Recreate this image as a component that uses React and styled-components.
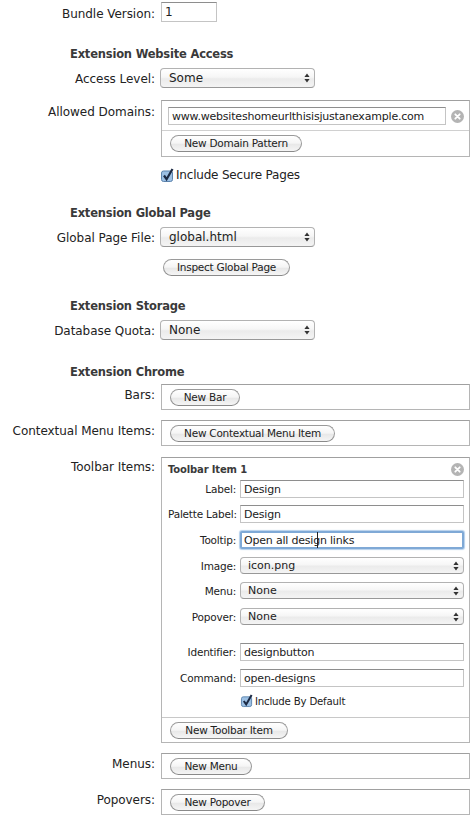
import React from 'react';
import styled, { createGlobalStyle } from 'styled-components';

const GlobalStyle = createGlobalStyle`
  html, body {
    margin: 0;
    padding: 0;
    background: #ffffff;
  }
  body {
    font-family: 'DejaVu Sans', 'Liberation Sans', sans-serif;
    color: #222222;
  }
  * {
    box-sizing: border-box;
  }
`;

const Page = styled.div`
  width: 474px;
  height: 822px;
  overflow: hidden;
  padding-top: 2px;
  display: flex;
  flex-direction: column;
`;

const Row = styled.div`
  display: flex;
  align-items: flex-start;
  margin-top: ${(p) => p.$top || 0}px;
`;

const Label = styled.label`
  width: 155px;
  flex: none;
  text-align: right;
  font-size: 12px;
  line-height: 16px;
  padding-top: ${(p) => p.$pad ?? 3}px;
  white-space: nowrap;
  letter-spacing: -0.05px;
`;

const Field = styled.div`
  margin-left: ${(p) => p.$left ?? 6}px;
  flex: none;
`;

const Heading = styled.h3`
  margin: ${(p) => p.$top}px 0 0 70px;
  height: 16px;
  font-size: 11.5px;
  line-height: 17px;
  font-weight: bold;
  color: #3a3a3a;
  letter-spacing: -0.2px;
`;

const TextInput = styled.input`
  display: block;
  width: ${(p) => p.$width}px;
  height: ${(p) => p.$height || 18}px;
  padding: 0 3px;
  border: 1px solid #c4c4c4;
  border-top: 1px solid #8e8e8e;
  border-radius: 0;
  outline: none;
  background: #fff;
  color: #222;
  font-family: inherit;
  font-size: ${(p) => p.$size || 11}px;
  letter-spacing: -0.2px;
  ${(p) =>
    p.$focused &&
    `
    border: 2px solid #7fa9d6;
    padding: 0 2px;
    box-shadow: 0 0 1px 1px #b5d0ec;
    border-radius: 2px;
  `}
`;

const Caret = styled.span`
  position: absolute;
  left: 77px;
  top: 1px;
  width: 1px;
  height: 16px;
  background: #222;
`;

const SelectWrap = styled.div`
  position: relative;
  width: ${(p) => p.$width}px;
  height: ${(p) => p.$height}px;
`;

const Select = styled.select`
  appearance: none;
  display: block;
  width: 100%;
  height: 100%;
  padding: 0 20px 0 ${(p) => p.$pad}px;
  border: 1px solid #b2b2b2;
  border-bottom-color: #989898;
  border-radius: 4px;
  background: linear-gradient(#ffffff 0%, #f6f6f6 45%, #ebebeb 55%, #f4f4f4 100%);
  color: #222;
  font-family: inherit;
  font-size: ${(p) => p.$size}px;
`;

const Arrows = styled.svg`
  position: absolute;
  right: 5px;
  top: 50%;
  margin-top: -5px;
  width: 6px;
  height: 10px;
  pointer-events: none;
`;

const Pill = styled.button`
  display: block;
  width: ${(p) => p.$width}px;
  height: 17px;
  padding: 0;
  border: 1px solid #9a9a9a;
  border-bottom-color: #8a8a8a;
  border-radius: 9px;
  background: linear-gradient(#ffffff 0%, #f5f5f5 48%, #e8e8e8 55%, #f5f5f5 100%);
  color: #222;
  font-family: inherit;
  font-size: 10.5px;
  line-height: 15px;
  letter-spacing: -0.25px;
  text-align: center;
`;

const ListBox = styled.div`
  width: 309px;
  border: 1px solid #b5b5b5;
  border-top-color: #a0a0a0;
  background: #fff;
`;

const ButtonArea = styled.div`
  height: ${(p) => p.$height}px;
  padding: ${(p) => p.$top}px 0 0 8px;
`;

const DomainItem = styled.div`
  height: 30px;
  padding: 6px 0 0 6px;
  display: flex;
  border-bottom: 1px solid #d0d0d0;
  gap: 5px;
`;

const Circle = styled.svg`
  width: 13px;
  height: 13px;
  flex: none;
  margin-top: ${(p) => p.$top}px;
`;

const CheckLine = styled.div`
  display: flex;
  align-items: center;
  gap: ${(p) => p.$gap}px;
  margin: ${(p) => p.$top}px 0 0 ${(p) => p.$left}px;
  height: ${(p) => p.$height}px;
  font-size: ${(p) => p.$size}px;
  letter-spacing: -0.2px;
  white-space: nowrap;
`;

const CheckIcon = styled.svg`
  width: ${(p) => p.$box}px;
  height: ${(p) => p.$box}px;
  flex: none;
  overflow: visible;
`;

const ItemPanel = styled.div`
  height: 260px;
  padding: 3px 5px 0 6px;
  border-bottom: 1px solid #c8c8c8;
`;

const ItemTitle = styled.div`
  display: flex;
  justify-content: space-between;
  align-items: center;
  height: 16px;
  font-size: 10px;
  font-weight: bold;
  color: #3a3a3a;
  letter-spacing: -0.15px;
`;

const ItemRow = styled.div`
  display: flex;
  align-items: center;
  height: ${(p) => p.$height || 18}px;
  margin-top: ${(p) => p.$top}px;
`;

const ItemLabel = styled.label`
  width: 68px;
  flex: none;
  text-align: right;
  font-size: 10.5px;
  letter-spacing: -0.2px;
  white-space: nowrap;
`;

const ItemControl = styled.div`
  position: relative;
  margin-left: 4px;
`;

const UpDown = () => (
  <Arrows viewBox="0 0 6 10">
    <path d="M3 0.5 L5.6 4 L0.4 4 Z M3 9.5 L5.6 6 L0.4 6 Z" fill="#333" />
  </Arrows>
);

const RemoveIcon = ({ top }) => (
  <Circle $top={top} viewBox="0 0 13 13">
    <circle cx="6.5" cy="6.5" r="6.5" fill="#b4b4b4" />
    <path d="M4.3 4.3 L8.7 8.7 M8.7 4.3 L4.3 8.7" stroke="#fff" strokeWidth="1.8" strokeLinecap="round" />
  </Circle>
);

const Tick = ({ box }) => (
  <CheckIcon $box={box} viewBox="0 0 13 13">
    <rect x="0.5" y="2" width="11" height="10.5" rx="2" fill="#9cc0e4" stroke="#5b83ad" />
    <path d="M3 6.5 L5.6 10.2 L11.5 0" fill="none" stroke="#1b2a44" strokeWidth="2.2" />
  </CheckIcon>
);

const DropDown = ({ width, height = 20, pad = 8, size = 12, value }) => (
  <SelectWrap $width={width} $height={height}>
    <Select $pad={pad} $size={size} defaultValue={value}>
      <option>{value}</option>
    </Select>
    <UpDown />
  </SelectWrap>
);

const ToolbarField = ({ label, top, value, focused }) => (
  <ItemRow $top={top}>
    <ItemLabel>{label}</ItemLabel>
    <ItemControl>
      <TextInput $width={224} $focused={focused} defaultValue={value} />
      {focused && <Caret />}
    </ItemControl>
  </ItemRow>
);

const ToolbarSelect = ({ label, top, value }) => (
  <ItemRow $top={top} $height={17}>
    <ItemLabel>{label}</ItemLabel>
    <ItemControl>
      <DropDown width={224} height={17} pad={7} size={11} value={value} />
    </ItemControl>
  </ItemRow>
);

export default function App() {
  return (
    <Page>
      <GlobalStyle />
      <Row>
        <Label $pad={4}>Bundle Version:</Label>
        <Field>
          <TextInput $width={56} $height={20} $size={12} defaultValue="1" />
        </Field>
      </Row>

      <Heading $top={24}>Extension Website Access</Heading>
      <Row $top={6}>
        <Label $pad={3}>Access Level:</Label>
        <Field $left={5}>
          <DropDown width={155} value="Some" />
        </Field>
      </Row>
      <Row $top={12}>
        <Label $pad={4}>Allowed Domains:</Label>
        <Field>
          <ListBox>
            <DomainItem>
              <TextInput $width={278} defaultValue="www.websiteshomeurlthisisjustanexample.com" />
              <RemoveIcon top={3} />
            </DomainItem>
            <ButtonArea $height={25} $top={4}>
              <Pill $width={132}>New Domain Pattern</Pill>
            </ButtonArea>
          </ListBox>
        </Field>
      </Row>
      <CheckLine $top={11} $left={161} $gap={2} $height={14} $size={12}>
        <Tick box={13} />
        Include Secure Pages
      </CheckLine>

      <Heading $top={23}>Extension Global Page</Heading>
      <Row $top={6}>
        <Label $pad={3}>Global Page File:</Label>
        <Field $left={5}>
          <DropDown width={155} value="global.html" />
        </Field>
      </Row>
      <Row $top={12}>
        <Field $left={163}>
          <Pill $width={127}>Inspect Global Page</Pill>
        </Field>
      </Row>

      <Heading $top={22}>Extension Storage</Heading>
      <Row $top={6}>
        <Label $pad={3}>Database Quota:</Label>
        <Field $left={5}>
          <DropDown width={155} value="None" />
        </Field>
      </Row>

      <Heading $top={24}>Extension Chrome</Heading>
      <Row $top={4}>
        <Label $pad={3}>Bars:</Label>
        <Field>
          <ListBox>
            <ButtonArea $height={24} $top={4}>
              <Pill $width={70}>New Bar</Pill>
            </ButtonArea>
          </ListBox>
        </Field>
      </Row>
      <Row $top={10}>
        <Label $pad={3}>Contextual Menu Items:</Label>
        <Field>
          <ListBox>
            <ButtonArea $height={24} $top={4}>
              <Pill $width={165}>New Contextual Menu Item</Pill>
            </ButtonArea>
          </ListBox>
        </Field>
      </Row>
      <Row $top={11}>
        <Label $pad={2}>Toolbar Items:</Label>
        <Field>
          <ListBox>
            <ItemPanel>
              <ItemTitle>
                Toolbar Item 1
                <RemoveIcon top={0} />
              </ItemTitle>
              <ToolbarField label="Label:" top={3} value="Design" />
              <ToolbarField label="Palette Label:" top={7} value="Design" />
              <ToolbarField label="Tooltip:" top={8} value="Open all design links" focused />
              <ToolbarSelect label="Image:" top={8} value="icon.png" />
              <ToolbarSelect label="Menu:" top={8} value="None" />
              <ToolbarSelect label="Popover:" top={9} value="None" />
              <ToolbarField label="Identifier:" top={18} value="designbutton" />
              <ToolbarField label="Command:" top={8} value="open-designs" />
              <CheckLine $top={7} $left={73} $gap={2} $height={14} $size={10.2}>
                <Tick box={12} />
                Include By Default
              </CheckLine>
            </ItemPanel>
            <ButtonArea $height={24} $top={4}>
              <Pill $width={118}>New Toolbar Item</Pill>
            </ButtonArea>
          </ListBox>
        </Field>
      </Row>
      <Row $top={10}>
        <Label $pad={3}>Menus:</Label>
        <Field>
          <ListBox>
            <ButtonArea $height={24} $top={4}>
              <Pill $width={82}>New Menu</Pill>
            </ButtonArea>
          </ListBox>
        </Field>
      </Row>
      <Row $top={10}>
        <Label $pad={3}>Popovers:</Label>
        <Field>
          <ListBox>
            <ButtonArea $height={24} $top={4}>
              <Pill $width={95}>New Popover</Pill>
            </ButtonArea>
          </ListBox>
        </Field>
      </Row>
    </Page>
  );
}
